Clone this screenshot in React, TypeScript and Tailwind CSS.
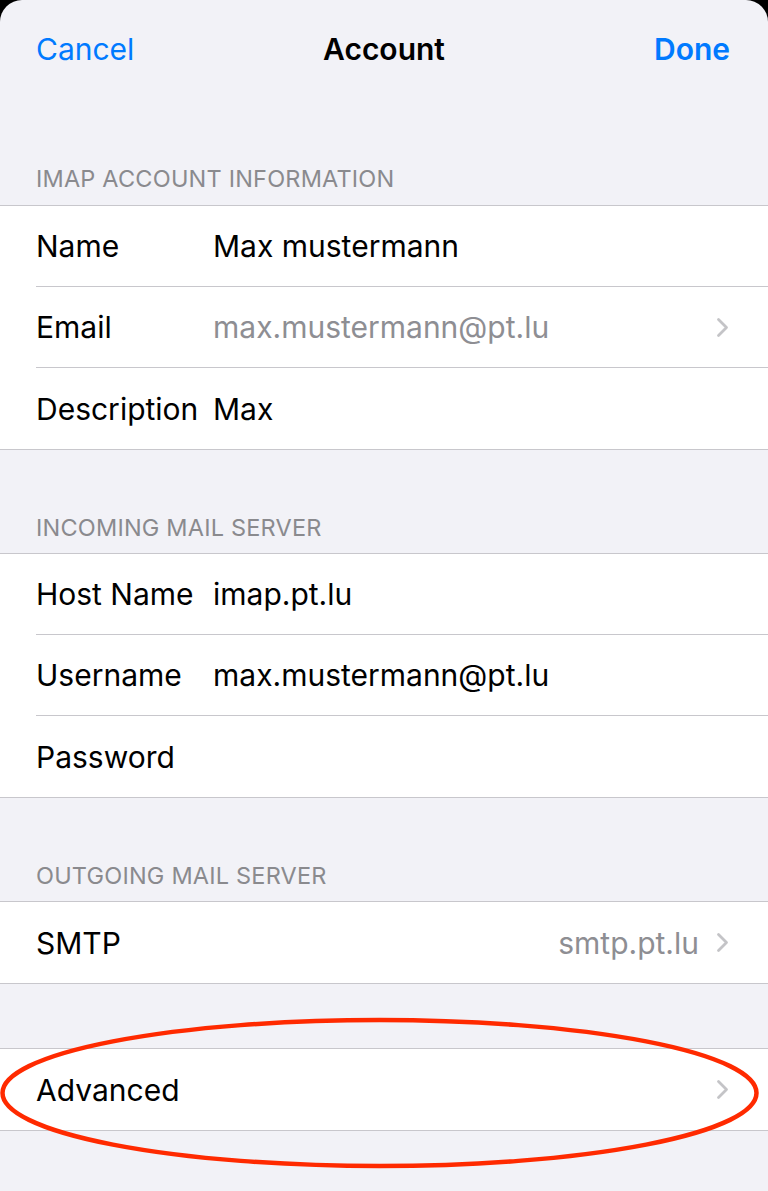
import React from "react";

const Chevron = () => (
  <svg width="13" height="21" viewBox="0 0 13 21" fill="none" className="shrink-0">
    <path d="M2.5 2.5 L10.5 10.5 L2.5 18.5" stroke="#c4c4c7" strokeWidth="2.8" strokeLinecap="round" strokeLinejoin="round" />
  </svg>
);

type RowProps = {
  label: string;
  value?: string;
  gray?: boolean;
  chevron?: boolean;
  last?: boolean;
  rightValue?: string;
};

const Row = ({ label, value, gray, chevron, last, rightValue }: RowProps) => (
  <div className="pl-[36px]">
    <div
      className={
        "h-[81px] flex items-center pr-[39px] " +
        (last ? "" : "border-b border-[#c8c7cc]")
      }
    >
      <div className="w-[177px] shrink-0 text-black">{label}</div>
      <div className={"flex-1 " + (gray ? "text-[#8e8e93]" : "text-black")}>{value}</div>
      {rightValue && <div className="text-[#8e8e93] mr-[17px]">{rightValue}</div>}
      {chevron && <Chevron />}
    </div>
  </div>
);

const Group = ({ children }: { children: React.ReactNode }) => (
  <div className="bg-white border-y border-[#c8c7cc]">{children}</div>
);

const SectionHeader = ({ title }: { title: string }) => (
  <div className="h-[103px] flex items-end pl-[36px] pb-[14px] text-[23.5px] text-[#8a8a8e] tracking-[0.2px]">
    {title}
  </div>
);

export default function App() {
  return (
    <div className="w-[768px] h-[1191px] bg-black overflow-hidden" style={{ fontFamily: "Inter, 'Noto Sans', sans-serif" }}>
      <div className="relative h-full bg-[#f2f2f7] rounded-t-[22px] text-[30px] leading-none">
        <div className="h-[100px] grid grid-cols-[1fr_auto_1fr] items-center px-[38px] pb-[2px]">
          <span className="text-[#007aff] text-[30px] justify-self-start -ml-[2px]">Cancel</span>
          <span className="text-black font-semibold text-[30px]">Account</span>
          <span className="text-[#007aff] font-semibold text-[30px] justify-self-end">Done</span>
        </div>
        <div className="h-[105px] flex items-end pl-[36px] pb-[15px] text-[23.5px] text-[#8a8a8e] tracking-[0.2px]">
          IMAP ACCOUNT INFORMATION
        </div>
        <Group>
          <Row label="Name" value="Max mustermann" />
          <Row label="Email" value="max.mustermann@pt.lu" gray chevron />
          <Row label="Description" value="Max" last />
        </Group>
        <SectionHeader title="INCOMING MAIL SERVER" />
        <Group>
          <Row label="Host Name" value="imap.pt.lu" />
          <Row label="Username" value="max.mustermann@pt.lu" />
          <Row label="Password" value="" last />
        </Group>
        <SectionHeader title="OUTGOING MAIL SERVER" />
        <Group>
          <Row label="SMTP" rightValue="smtp.pt.lu" chevron last />
        </Group>
        <div className="h-[64px]" />
        <Group>
          <Row label="Advanced" chevron last />
        </Group>

        <svg
          className="absolute left-0 top-[1014px] pointer-events-none"
          width="768"
          height="160"
          viewBox="0 1014 768 160"
        >
          <ellipse cx="379.5" cy="1093" rx="377" ry="73" fill="none" stroke="#ff2a00" strokeWidth="4.5" />
        </svg>
      </div>
    </div>
  );
}
